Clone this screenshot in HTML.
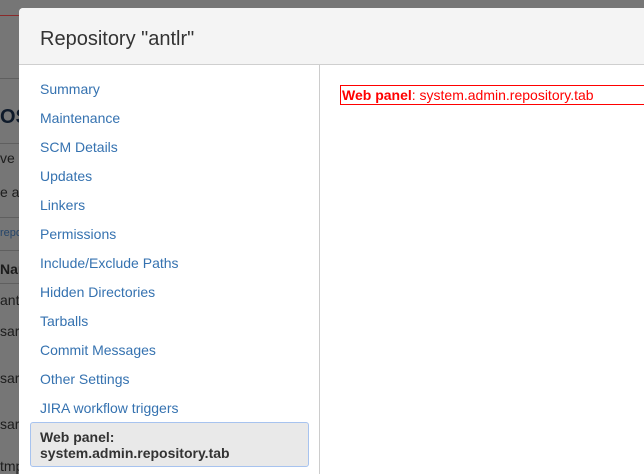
<!DOCTYPE html>
<html style="overflow:hidden;height:474px"><head><style>
body{margin:0;width:644px;height:474px;overflow:hidden;background:#767676;font-family:"Liberation Sans",sans-serif;position:relative}
.bg{position:absolute;left:0;top:0;width:19px;height:474px;color:#1c1c1c;font-size:14px;white-space:nowrap;overflow:hidden}
.bg div{position:absolute;left:0}
.ln{height:1px;background:#5f5f5f;width:19px}
.dlg{position:absolute;left:19px;top:8px;width:625px;height:466px;overflow:hidden;background:#fff;border-radius:4px 0 0 0}
.hd{height:56px;background:#f4f4f4;border-bottom:1px solid #cfcfcf;border-radius:4px 0 0 0}
.hd h1{margin:0;font-weight:normal;font-size:20px;color:#333;position:absolute;left:21px;top:20px}
.side{position:absolute;left:0;top:57px;width:300px;height:420px;border-right:1px solid #ccc}
.side a{position:absolute;left:21px;color:#3572b0;font-size:14px;text-decoration:none}
.sel{position:absolute;left:11px;top:357px;width:279px;height:45px;background:#e9e9e9;border:1px solid #a7c3ef;border-radius:3px;font-weight:bold;font-size:14px;color:#333;line-height:16px;padding:6px 0 0 9px;box-sizing:border-box}
.wp{position:absolute;left:321px;top:77px;width:310px;height:20px;border:1px solid red;color:red;font-size:14px;line-height:19px;box-sizing:border-box;padding-left:1px}
</style></head><body>
<div class="bg">
<div class="ln" style="top:15px;background:#8a2a2a"></div>
<div class="ln" style="top:78px"></div>
<div style="top:106px;font-size:20px;font-weight:bold;color:#0e1a2a">OS</div>
<div class="ln" style="top:143px"></div>
<div style="top:150px">ve r</div>
<div style="top:184px">e ar</div>
<div class="ln" style="top:217px"></div>
<div style="top:227px;font-size:11px;color:#25456a">repo</div>
<div class="ln" style="top:250px"></div>
<div style="top:261px;font-weight:bold">Nar</div>
<div class="ln" style="top:283px"></div>
<div style="top:292px">ant</div>
<div style="top:323px">sar</div>
<div style="top:370px">sar</div>
<div style="top:416px">sar</div>
<div style="top:458px">tmp</div>
</div>
<div class="dlg">
<div class="hd"><h1>Repository "antlr"</h1></div>
<div class="side">
<a style="top:16px">Summary</a>
<a style="top:45px">Maintenance</a>
<a style="top:74px">SCM Details</a>
<a style="top:103px">Updates</a>
<a style="top:132px">Linkers</a>
<a style="top:161px">Permissions</a>
<a style="top:190px">Include/Exclude Paths</a>
<a style="top:219px">Hidden Directories</a>
<a style="top:248px">Tarballs</a>
<a style="top:277px">Commit Messages</a>
<a style="top:306px">Other Settings</a>
<a style="top:335px">JIRA workflow triggers</a>
<div class="sel">Web panel:<br>system.admin.repository.tab</div>
</div>
<div class="wp"><b>Web panel</b>: system.admin.repository.tab</div>
</div>
</body></html>
